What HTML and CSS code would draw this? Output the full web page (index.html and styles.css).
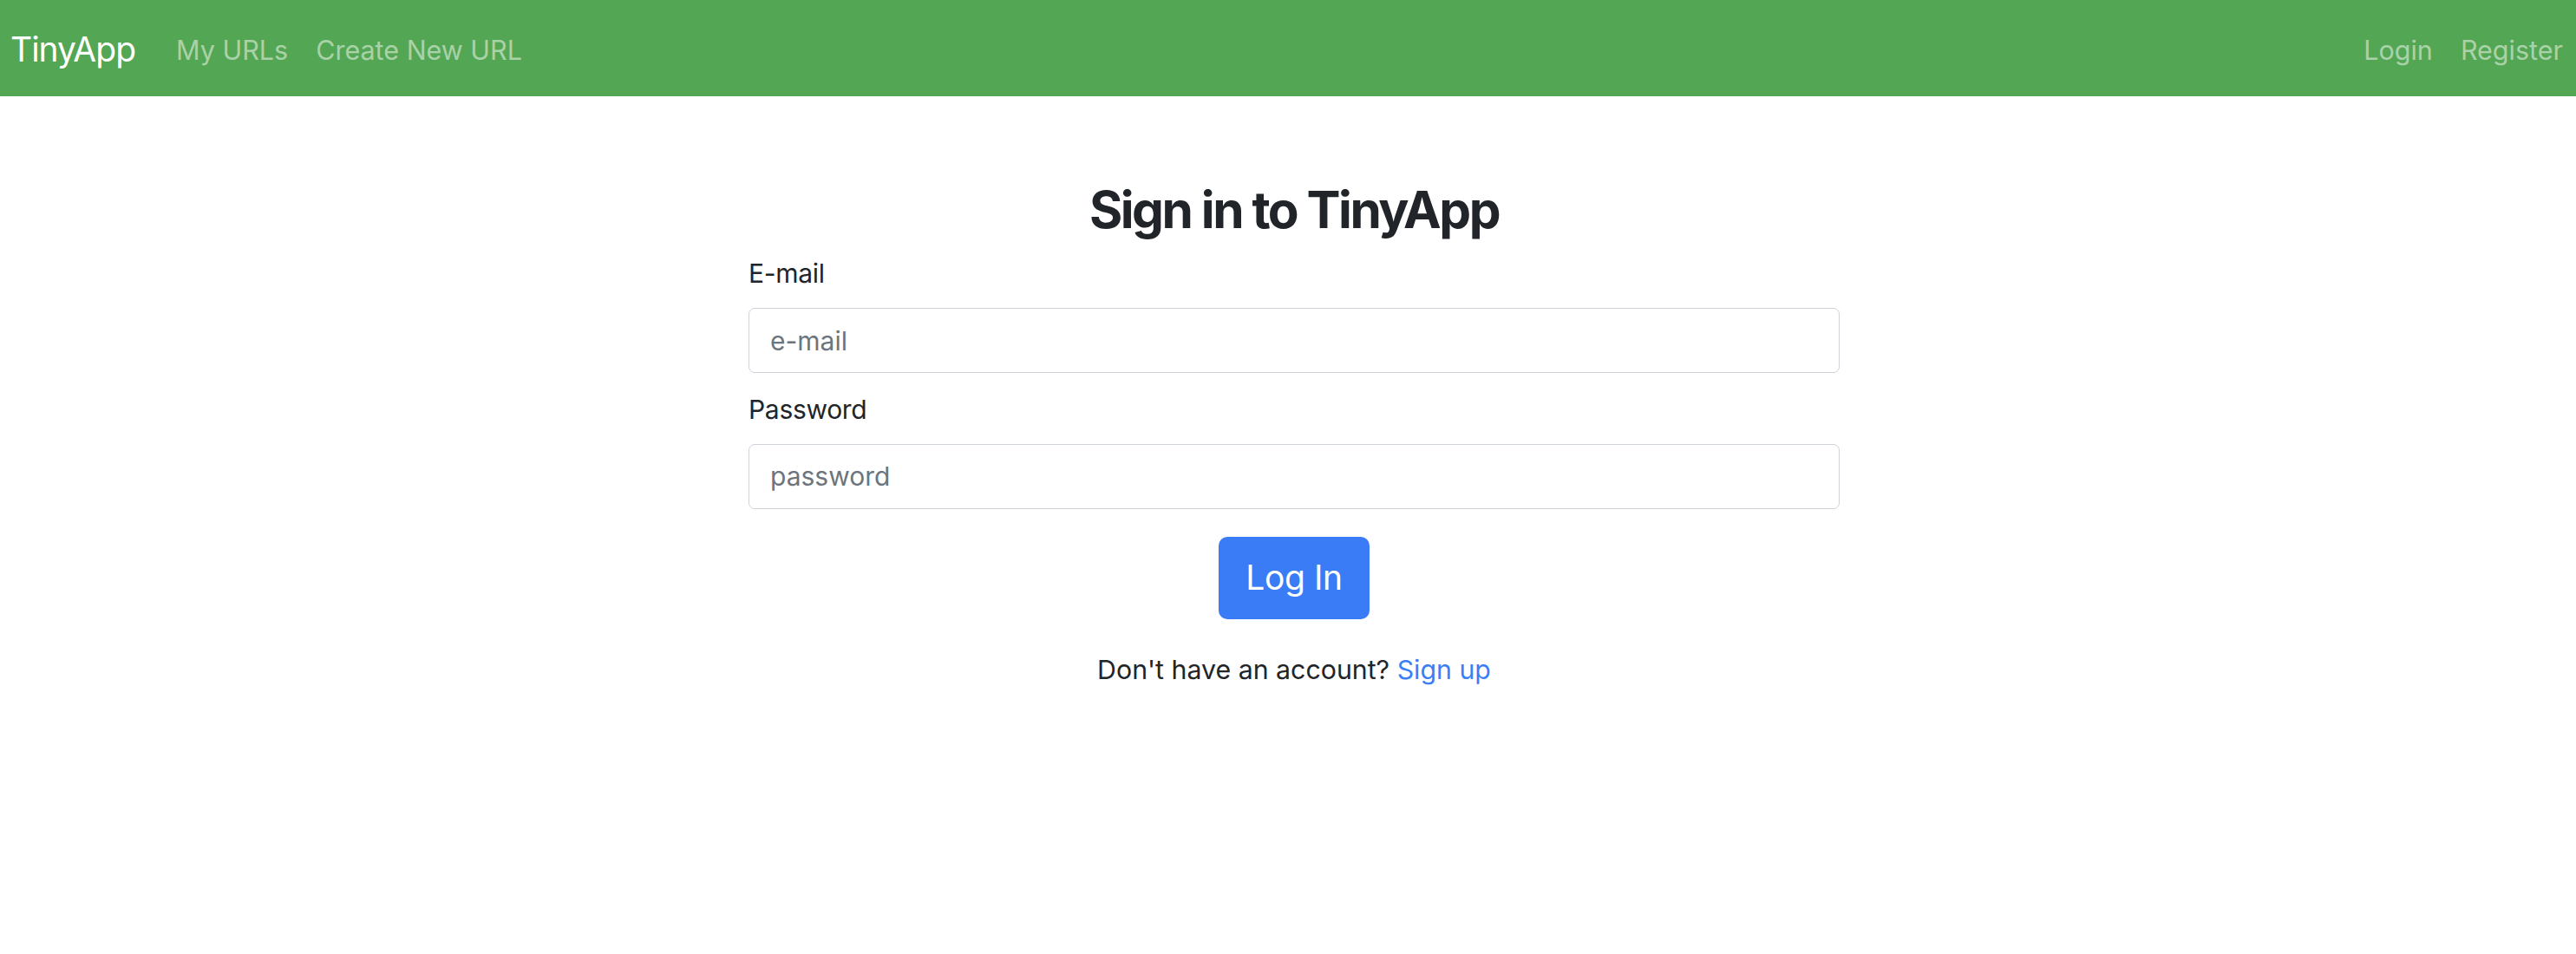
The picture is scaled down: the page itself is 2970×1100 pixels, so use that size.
FILE: index.html
```html
<!DOCTYPE html>
<html lang="en">
<head>
<meta charset="utf-8">
<title>TinyApp - Login</title>
<link rel="stylesheet" href="styles.css">
</head>
<body>
<nav class="navbar">
  <div class="nav-left">
    <a class="brand" href="#">TinyApp</a>
    <a class="nav-link" href="#">My URLs</a>
    <a class="nav-link" href="#">Create New URL</a>
  </div>
  <div class="nav-right">
    <a class="nav-link" href="#">Login</a>
    <a class="nav-link" href="#">Register</a>
  </div>
</nav>
<main class="main">
  <form class="login-form">
    <h2 class="title">Sign in to TinyApp</h2>
    <label class="field-label" for="email">E-mail</label>
    <input class="field-input" id="email" type="text" placeholder="e-mail">
    <label class="field-label second" for="password">Password</label>
    <input class="field-input" id="password" type="password" placeholder="password">
    <div class="actions">
      <button class="btn-primary" type="button">Log In</button>
    </div>
    <p class="signup">Don't have an account? <a class="signup-link" href="#">Sign up</a></p>
  </form>
</main>
</body>
</html>
```

FILE: styles.css
```css
* { box-sizing: border-box; }
html, body { margin: 0; padding: 0; }
body {
  font-family: Inter, "Noto Sans", sans-serif;
  font-size: 30px;
  line-height: 1.5;
  color: #212529;
  background: #ffffff;
}
a { text-decoration: none; }

.navbar {
  height: 111px;
  padding: 3px 15px 0 12px;
  background: #53a653;
  display: flex;
  align-items: center;
  justify-content: space-between;
}
.nav-left, .nav-right {
  display: flex;
  align-items: center;
}
.brand {
  font-size: 39px;
  line-height: 60px;
  color: #ffffff;
  margin-right: 31px;
  letter-spacing: -1px;
}
.nav-link {
  font-size: 30.5px;
  line-height: 45px;
  color: rgba(255, 255, 255, 0.5);
  padding: 0 16px;
}
.nav-right .nav-link:last-child { padding-right: 0; }

.main {
  display: flex;
  justify-content: center;
  padding-left: 14px;
}
.login-form {
  width: 1258px;
  display: flex;
  flex-direction: column;
}
.title {
  margin: 96px 0 16px;
  font-size: 58.5px;
  line-height: 1.2;
  font-weight: 700;
  text-align: center;
  letter-spacing: -2.5px;
}
.field-label {
  display: block;
  margin-bottom: 17px;
  letter-spacing: -0.3px;
}
.field-label.second { margin-top: 19.5px; }
.field-input {
  display: block;
  width: 100%;
  height: 75px;
  padding: 13.5px 24px;
  font-family: inherit;
  font-size: 30px;
  line-height: 45px;
  color: #212529;
  border: 1.5px solid #ced4da;
  border-radius: 7px;
  background: #fff;
  outline: none;
}
.field-input::placeholder { color: #6c757d; opacity: 1; }
.actions {
  display: flex;
  justify-content: center;
  margin-top: 32px;
}
.btn-primary {
  width: 174px;
  height: 95px;
  padding: 0;
  font-family: inherit;
  font-size: 39px;
  line-height: 58px;
  color: #ffffff;
  background: #3a7cf6;
  border: none;
  border-radius: 10px;
  letter-spacing: -0.4px;
}
.signup {
  margin: 36px 0 0;
  text-align: center;
  font-size: 30.3px;
}
.signup-link { color: #3b7ff6; }
```
